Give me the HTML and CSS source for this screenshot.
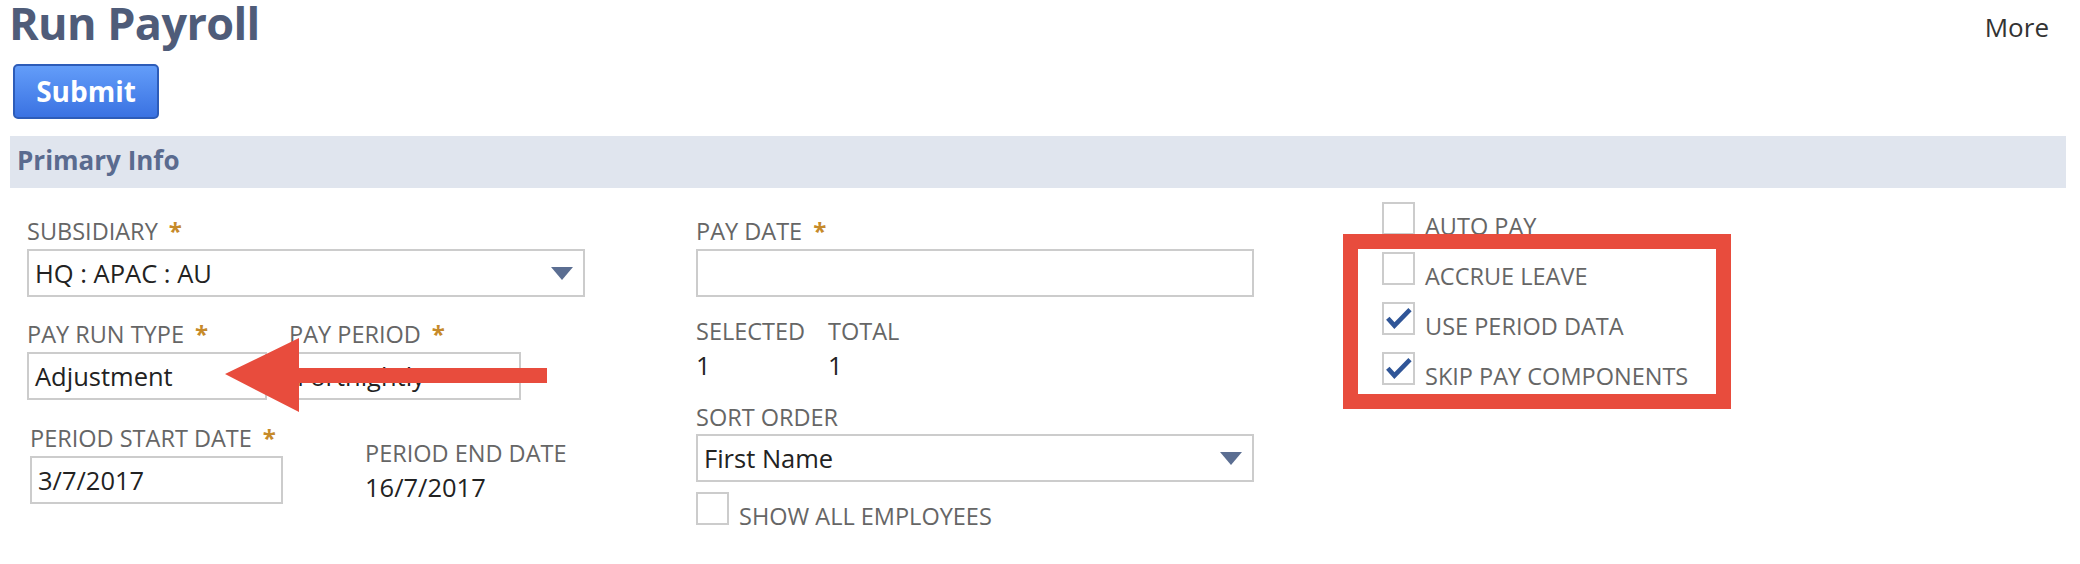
FILE: index.html
```html
<!DOCTYPE html>
<html lang="en">
<head>
<meta charset="utf-8">
<title>Run Payroll</title>
<link rel="stylesheet" href="styles.css">
</head>
<body>
<div class="page">
  <header class="top">
    <h1 class="title">Run Payroll</h1>
    <a class="more">More</a>
  </header>
  <div class="actions">
    <button class="btn-submit" type="button">Submit</button>
  </div>
  <div class="section-bar"><span class="section-title">Primary Info</span></div>

  <div class="form">
    <div class="col col1">
      <div class="field">
        <div class="label">SUBSIDIARY<span class="req">*</span></div>
        <div class="input select w-wide"><span>HQ : APAC : AU</span><span class="tri"></span></div>
      </div>
      <div class="row row2">
        <div class="field">
          <div class="label">PAY RUN TYPE<span class="req">*</span></div>
          <div class="input select w-runtype"><span>Adjustment</span></div>
        </div>
        <div class="field">
          <div class="label">PAY PERIOD<span class="req">*</span></div>
          <div class="input select w-period"><span>Fortnightly</span><span class="tri"></span></div>
        </div>
      </div>
      <div class="row row3">
        <div class="field start">
          <div class="label">PERIOD START DATE<span class="req">*</span></div>
          <div class="input w-start"><span>3/7/2017</span></div>
        </div>
        <div class="field end">
          <div class="label">PERIOD END DATE</div>
          <div class="value">16/7/2017</div>
        </div>
      </div>
    </div>

    <div class="col col2">
      <div class="field">
        <div class="label">PAY DATE<span class="req">*</span></div>
        <div class="input w-wide"></div>
      </div>
      <div class="row stats">
        <div class="stat sel">
          <div class="label">SELECTED</div>
          <div class="value">1</div>
        </div>
        <div class="stat">
          <div class="label">TOTAL</div>
          <div class="value">1</div>
        </div>
      </div>
      <div class="field sort">
        <div class="label">SORT ORDER</div>
        <div class="input select w-wide"><span>First Name</span><span class="tri"></span></div>
      </div>
      <div class="check-row show-all">
        <span class="box"></span>
        <span class="check-label">SHOW ALL EMPLOYEES</span>
      </div>
    </div>

    <div class="col col3">
      <div class="check-row">
        <span class="box"></span>
        <span class="check-label">AUTO PAY</span>
      </div>
      <div class="check-row">
        <span class="box"></span>
        <span class="check-label">ACCRUE LEAVE</span>
      </div>
      <div class="check-row">
        <span class="box"><svg class="tick" viewBox="0 0 29 29" width="29" height="29"><path d="M3.8 14.2 L10.4 21.6 L26 5.6" /></svg></span>
        <span class="check-label">USE PERIOD DATA</span>
      </div>
      <div class="check-row">
        <span class="box"><svg class="tick" viewBox="0 0 29 29" width="29" height="29"><path d="M3.8 14.2 L10.4 21.6 L26 5.6" /></svg></span>
        <span class="check-label">SKIP PAY COMPONENTS</span>
      </div>
    </div>
  </div>

  <svg class="arrow" viewBox="0 0 322 74" width="322" height="74"><polygon points="0,36 74,0 74,30 322,30 322,45 74,45 74,74" /></svg>
  <div class="highlight"></div>
</div>
</body>
</html>
```

FILE: styles.css
```css
* { box-sizing: border-box; }
html, body { margin: 0; padding: 0; background: #ffffff; }
body {
  font-family: "Open Sans", "Liberation Sans", Arial, sans-serif;
  color: #222222;
  width: 2080px;
  height: 564px;
  overflow: hidden;
}
.page { position: relative; width: 2080px; height: 564px; }

.top {
  display: flex;
  justify-content: space-between;
  align-items: flex-start;
  height: 46px;
  padding-left: 9px;
  padding-right: 31px;
}
.title {
  margin: 0;
  font-size: 45px;
  line-height: 46px;
  font-weight: 700;
  letter-spacing: -0.6px;
  color: #4f5c79;
}
.more {
  font-size: 26px;
  line-height: 46px;
  padding-top: 4px;
  color: #333333;
}

.actions { margin-top: 18px; padding-left: 13px; height: 55px; }
.btn-submit {
  width: 146px;
  height: 55px;
  border: 2px solid #2d5cb8;
  border-radius: 5px;
  background: linear-gradient(#639df9, #3a72e2);
  color: #ffffff;
  font-family: "Open Sans", "Liberation Sans", Arial, sans-serif;
  font-size: 28px;
  font-weight: 700;
  line-height: 51px;
  padding: 0;
  margin: 0;
}

.section-bar {
  margin-top: 17px;
  margin-left: 10px;
  width: 2056px;
  height: 52px;
  background: #e0e5ee;
  padding-left: 7px;
}
.section-title {
  font-size: 26px;
  line-height: 48px;
  font-weight: 700;
  color: #5a6b8f;
}

.form {
  display: grid;
  grid-template-columns: 669px 686px 1fr;
  padding-left: 27px;
}
.col1, .col2 { padding-top: 31px; }
.col3 { padding-top: 14px; }

.label {
  font-size: 23.5px;
  line-height: 24px;
  color: #666666;
  white-space: nowrap;
}
.req {
  color: #c68a2a;
  font-weight: 700;
  font-size: 24px;
  margin-left: 11px;
}
.field .label { margin-bottom: 6px; }

.input {
  height: 48px;
  border: 2px solid #cccccc;
  background: #ffffff;
  padding: 0 10px 0 6px;
  font-size: 25.5px;
  line-height: 44px;
  color: #222222;
  white-space: nowrap;
}
.select {
  display: flex;
  justify-content: space-between;
  align-items: center;
}
.tri {
  width: 0;
  height: 0;
  border-left: 11.5px solid transparent;
  border-right: 11.5px solid transparent;
  border-top: 13px solid #5b6e92;
}
.w-wide { width: 558px; }
.w-runtype { width: 240px; }
.w-period { width: 232px; }
.w-start { width: 253px; }

.row { display: flex; }
.row2 { margin-top: 25px; gap: 22px; }
.row3 { margin-top: 26px; }
.start { margin-left: 3px; }
.end { margin-left: 82px; padding-top: 15px; }
.end .label { margin-bottom: 5px; }

.value {
  font-size: 25.5px;
  line-height: 34px;
  color: #222222;
}

.stats { margin-top: 22px; }
.stat .label { margin-bottom: 5px; }
.stat.sel { width: 132px; }
.sort { margin-top: 23px; }
.sort .label { margin-bottom: 5px; }

.check-row {
  display: flex;
  align-items: flex-end;
  height: 33px;
}
.col3 .check-row + .check-row { margin-top: 17px; }
.show-all { margin-top: 10px; }
.box {
  width: 33px;
  height: 33px;
  border: 2px solid #cccccc;
  background: #ffffff;
  flex: none;
  display: block;
}
.check-label {
  font-size: 23.5px;
  line-height: 24px;
  color: #666666;
  margin-left: 10px;
  margin-bottom: -3px;
  white-space: nowrap;
}
.tick { display: block; }
.tick path {
  fill: none;
  stroke: #2f5597;
  stroke-width: 4.6;
  stroke-linejoin: miter;
}

.arrow {
  position: absolute;
  left: 225px;
  top: 338px;
}
.arrow polygon { fill: #e84c3d; }

.highlight {
  position: absolute;
  left: 1343px;
  top: 234px;
  width: 388px;
  height: 175px;
  border: 15px solid #e84c3d;
}
```
